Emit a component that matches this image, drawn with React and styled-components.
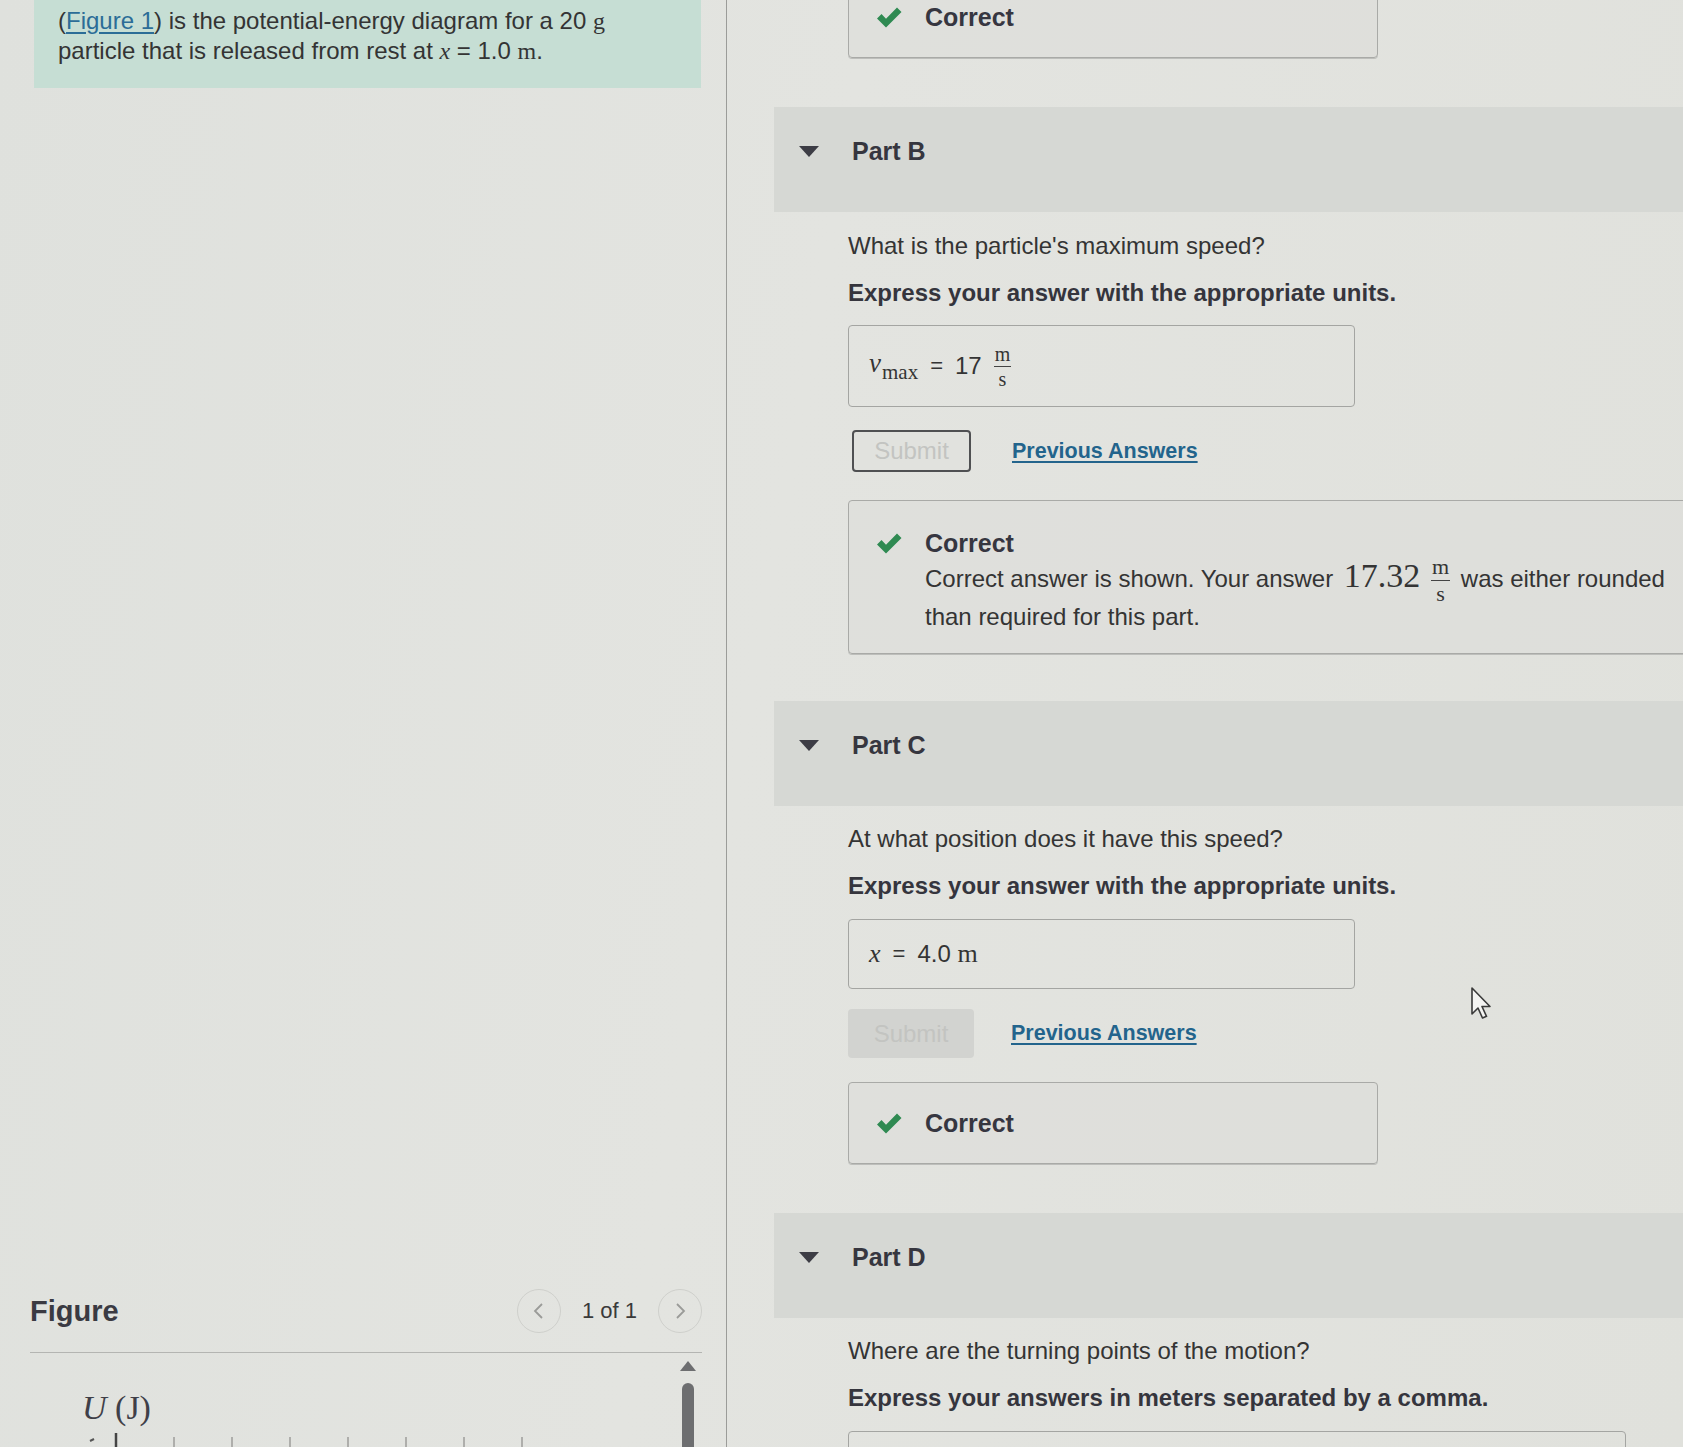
import React from 'react';
import styled, { createGlobalStyle } from 'styled-components';

const GlobalStyle = createGlobalStyle`
  html, body {
    margin: 0;
    padding: 0;
    background: #e1e2de;
    overflow: hidden;
  }
  body {
    font-family: "Liberation Sans", Arial, sans-serif;
    color: #343434;
  }
`;

const Page = styled.div`
  display: grid;
  grid-template-columns: 727px minmax(0, 1fr);
  height: 1447px;
  overflow: hidden;
  position: relative;
  background: linear-gradient(100deg, #dfe1dd 0%, #e3e4e0 45%, #e0e1dc 100%);
`;

const LeftPane = styled.div`
  display: flex;
  flex-direction: column;
  border-right: 1px solid #9b9c99;
  height: 1447px;
  overflow: hidden;
`;

const IntroBox = styled.div`
  margin: 0 25px 0 34px;
  padding: 6px 24px 22px;
  background: #c6ded4;
  font-size: 24px;
  line-height: 30px;
`;

const Link = styled.a`
  color: #2b6d97;
  text-decoration: underline;
  text-underline-offset: 3px;
`;

const MathVar = styled.span`
  font-family: "Liberation Serif", "Times New Roman", serif;
  font-style: italic;
  font-size: ${(p) => p.$size || 24}px;
`;

const MathUnit = styled.span`
  font-family: "Liberation Serif", "Times New Roman", serif;
  font-size: ${(p) => p.$size || 24}px;
`;

const Sub = styled.sub`
  font-family: "Liberation Serif", "Times New Roman", serif;
  font-size: 21px;
  vertical-align: -7px;
  margin-left: 1px;
`;

const Frac = styled.span`
  display: inline-flex;
  flex-direction: column;
  align-items: center;
  vertical-align: middle;
  font-family: "Liberation Serif", "Times New Roman", serif;
  font-size: ${(p) => p.$size || 19}px;
  line-height: 1;
  margin: -8px 4px;

  span:first-child {
    border-bottom: 1px solid #444;
    padding: 0 1px 2px;
  }
  span:last-child {
    padding-top: 2px;
  }
`;

const FigureSection = styled.div`
  margin-top: auto;
  padding: 0 24px 0 30px;
`;

const FigureHeader = styled.div`
  display: flex;
  align-items: center;
  justify-content: space-between;
  height: 50px;
  padding-bottom: 16px;
  border-bottom: 1px solid #b4b5b2;
`;

const FigureTitle = styled.div`
  font-size: 29px;
  font-weight: bold;
  color: #3a3a42;
`;

const Pager = styled.div`
  display: flex;
  align-items: center;
  gap: 21px;
  font-size: 22px;
  color: #3a3a3a;
`;

const PagerButton = styled.div`
  width: 42px;
  height: 42px;
  border-radius: 50%;
  border: 1px solid #cfd0cc;
  display: flex;
  align-items: center;
  justify-content: center;
  color: #9a9b98;
`;

const FigureBody = styled.div`
  position: relative;
  height: 94px;
`;

const AxisLabel = styled.div`
  padding: 38px 0 0 52px;
  font-family: "Liberation Serif", "Times New Roman", serif;
  font-size: 34px;
  line-height: 34px;
  color: #3f3f48;
`;

const Ticks = styled.svg`
  position: absolute;
  left: 0;
  bottom: 0;
`;

const ScrollBar = styled.div`
  position: absolute;
  right: 8px;
  top: 8px;
  bottom: 0;
  width: 12px;
  display: flex;
  flex-direction: column;
  align-items: center;
  gap: 12px;
`;

const ScrollArrow = styled.div`
  width: 0;
  height: 0;
  border-left: 8px solid transparent;
  border-right: 8px solid transparent;
  border-bottom: 10px solid #6d6e70;
`;

const ScrollThumb = styled.div`
  flex: 1;
  width: 12px;
  border-radius: 6px 6px 0 0;
  background: #6d6e70;
`;

const RightPane = styled.div`
  display: flex;
  flex-direction: column;
  margin-top: -24px;
  padding-left: 47px;
  min-width: 0;
`;

const FeedbackBox = styled.div`
  display: flex;
  align-items: ${(p) => (p.$multi ? 'flex-start' : 'center')};
  width: ${(p) => p.$width || 530}px;
  height: ${(p) => p.$height || 82}px;
  box-sizing: border-box;
  flex-shrink: 0;
  margin: ${(p) => p.$mt || 0}px 0 0 ${(p) => p.$ml || 0}px;
  padding: ${(p) => (p.$multi ? '28px 0 0 27px' : '0 0 0 27px')};
  border: 1px solid #a9aaa7;
  border-radius: 4px;
  background: rgba(220, 221, 217, 0.55);
  box-shadow: 0 1px 0 #bdbebb;
  overflow: hidden;
`;

const CheckWrap = styled.div`
  width: 27px;
  height: ${(p) => (p.$multi ? '28px' : 'auto')};
  display: flex;
  align-items: center;
  margin-right: 22px;
  flex-shrink: 0;
`;

const FeedbackText = styled.div`
  display: flex;
  flex-direction: column;
`;

const FeedbackTitle = styled.div`
  font-size: 25px;
  font-weight: bold;
  line-height: 28px;
  color: #363640;
`;

const FeedbackDetail = styled.div`
  font-size: 24px;
  line-height: 38px;
  white-space: nowrap;
`;

const BigNum = styled.span`
  font-family: "Liberation Serif", "Times New Roman", serif;
  font-size: 34px;
  margin-left: 4px;
`;

const PartHeader = styled.div`
  display: flex;
  align-items: center;
  box-sizing: border-box;
  height: 105px;
  margin-top: ${(p) => p.$mt}px;
  padding: 0 0 16px 25px;
  background: #d6d8d4;
`;

const Caret = styled.div`
  width: 0;
  height: 0;
  border-left: 10px solid transparent;
  border-right: 10px solid transparent;
  border-top: 11px solid #3d3d45;
  margin-right: 33px;
`;

const PartTitle = styled.div`
  font-size: 25px;
  font-weight: bold;
  color: #36363f;
`;

const PartBody = styled.div`
  display: flex;
  flex-direction: column;
  align-items: flex-start;
  padding: ${(p) => p.$pt || 19}px 0 0 ${(p) => p.$pl || 74}px;
`;

const Question = styled.div`
  font-size: 24px;
  line-height: 28px;
`;

const Instruction = styled.div`
  margin-top: 19px;
  font-size: 24px;
  line-height: 28px;
  font-weight: bold;
  color: #35353d;
`;

const AnswerBox = styled.div`
  display: flex;
  align-items: center;
  box-sizing: border-box;
  flex-shrink: 0;
  width: ${(p) => p.$width || 507}px;
  height: ${(p) => p.$height}px;
  margin-top: ${(p) => p.$mt || 18}px;
  padding-left: 20px;
  border: 1px solid #a4a5a2;
  border-radius: 4px;
  font-size: 24px;
  gap: 8px;
`;

const Equals = styled.span`
  font-size: 22px;
  margin: 0 4px;
`;

const ActionRow = styled.div`
  display: flex;
  align-items: center;
  gap: ${(p) => p.$gap}px;
  margin-top: ${(p) => p.$mt}px;
  margin-left: ${(p) => p.$ml || 0}px;
`;

const SubmitButton = styled.button`
  font-family: "Liberation Sans", Arial, sans-serif;
  font-size: 24px;
  color: #c3c4c1;
  width: ${(p) => p.$width}px;
  height: ${(p) => p.$height}px;
  border-radius: 4px;
  border: ${(p) => (p.$outlined ? '2px solid #4f5052' : 'none')};
  background: ${(p) => (p.$outlined ? '#e1e2de' : '#d2d3d0')};
  padding: 0;
`;

const PrevLink = styled.a`
  font-size: 21.5px;
  font-weight: bold;
  color: #23648c;
  text-decoration: underline;
  text-underline-offset: 3px;
`;

const Cursor = styled.svg`
  position: absolute;
  left: 1470px;
  top: 986px;
`;

const Check = () => (
  <svg width="27" height="23" viewBox="0 0 27 23">
    <path d="M1 12.5 L5.5 8 L10 12.8 L21 1.5 L25.5 6 L10 21.5 Z" fill="#2f8a52" />
  </svg>
);

const Chevron = ({ dir }) => (
  <svg width="14" height="20" viewBox="0 0 14 20">
    <path
      d={dir === 'left' ? 'M10 3 L3 10 L10 17' : 'M4 3 L11 10 L4 17'}
      fill="none"
      stroke="#9a9b98"
      strokeWidth="1.8"
    />
  </svg>
);

const MS = ({ size }) => (
  <Frac $size={size}>
    <span>m</span>
    <span>s</span>
  </Frac>
);

const App = () => (
  <>
    <GlobalStyle />
    <Page>
      <LeftPane>
        <IntroBox>
          (<Link>Figure 1</Link>) is the potential-energy diagram for a 20 <MathUnit>g</MathUnit>
          <br />
          particle that is released from rest at <MathVar>x</MathVar> = 1.0 <MathUnit>m</MathUnit>.
        </IntroBox>

        <FigureSection>
          <FigureHeader>
            <FigureTitle>Figure</FigureTitle>
            <Pager>
              <PagerButton><Chevron dir="left" /></PagerButton>
              <span>1 of 1</span>
              <PagerButton><Chevron dir="right" /></PagerButton>
            </Pager>
          </FigureHeader>
          <FigureBody>
            <AxisLabel>
              <MathVar $size={34}>U</MathVar> (J)
            </AxisLabel>
            <Ticks width="520" height="14" viewBox="0 0 520 14">
              <path d="M60 8 L64 6" stroke="#555" strokeWidth="2" />
              {[86, 144, 202, 260, 318, 376, 434, 492].map((x, i) => (
                <line
                  key={x}
                  x1={x}
                  x2={x}
                  y1={i === 0 ? 0 : 4}
                  y2="14"
                  stroke={i === 0 ? '#444' : '#9c9d9a'}
                  strokeWidth={i === 0 ? 2.5 : 1.5}
                />
              ))}
            </Ticks>
            <ScrollBar>
              <ScrollArrow />
              <ScrollThumb />
            </ScrollBar>
          </FigureBody>
        </FigureSection>
      </LeftPane>

      <RightPane>
        <FeedbackBox $ml={74}>
          <CheckWrap><Check /></CheckWrap>
          <FeedbackTitle>Correct</FeedbackTitle>
        </FeedbackBox>

        <PartHeader $mt={49}>
          <Caret />
          <PartTitle>Part B</PartTitle>
        </PartHeader>
        <PartBody $pt={20}>
          <Question>What is the particle's maximum speed?</Question>
          <Instruction>Express your answer with the appropriate units.</Instruction>
          <AnswerBox $height={82}>
            <span>
              <MathVar $size={27}>v</MathVar>
              <Sub>max</Sub>
            </span>
            <Equals>=</Equals>
            <span>17</span>
            <MS size={20} />
          </AnswerBox>
          <ActionRow $mt={23} $gap={41} $ml={4}>
            <SubmitButton $outlined $width={119} $height={42}>Submit</SubmitButton>
            <PrevLink>Previous Answers</PrevLink>
          </ActionRow>
          <FeedbackBox $multi $mt={28} $width={880} $height={154}>
            <CheckWrap $multi><Check /></CheckWrap>
            <FeedbackText>
              <FeedbackTitle>Correct</FeedbackTitle>
              <FeedbackDetail>
                Correct answer is shown. Your answer <BigNum>17.32</BigNum> <MS size={22} /> was either rounded
                <br />
                than required for this part.
              </FeedbackDetail>
            </FeedbackText>
          </FeedbackBox>
        </PartBody>

        <PartHeader $mt={47}>
          <Caret />
          <PartTitle>Part C</PartTitle>
        </PartHeader>
        <PartBody>
          <Question>At what position does it have this speed?</Question>
          <Instruction>Express your answer with the appropriate units.</Instruction>
          <AnswerBox $height={70} $mt={19}>
            <MathVar $size={26}>x</MathVar>
            <Equals>=</Equals>
            <span>
              4.0 <MathUnit $size={26}>m</MathUnit>
            </span>
          </AnswerBox>
          <ActionRow $mt={20} $gap={37}>
            <SubmitButton $width={126} $height={49}>Submit</SubmitButton>
            <PrevLink>Previous Answers</PrevLink>
          </ActionRow>
          <FeedbackBox $mt={24}>
            <CheckWrap><Check /></CheckWrap>
            <FeedbackTitle>Correct</FeedbackTitle>
          </FeedbackBox>
        </PartBody>

        <PartHeader $mt={49}>
          <Caret />
          <PartTitle>Part D</PartTitle>
        </PartHeader>
        <PartBody>
          <Question>Where are the turning points of the motion?</Question>
          <Instruction>Express your answers in meters separated by a comma.</Instruction>
          <AnswerBox $width={778} $height={82} $mt={19} />
        </PartBody>
      </RightPane>

      <Cursor width="26" height="36" viewBox="0 0 26 36">
        <path
          d="M2 2 L2 28 L8 22 L12.5 32 L16.5 30.3 L12 20.5 L20 20.5 Z"
          fill="#f4f4f2"
          stroke="#3a3a3a"
          strokeWidth="1.6"
          strokeLinejoin="round"
        />
      </Cursor>
    </Page>
  </>
);

export default App;
